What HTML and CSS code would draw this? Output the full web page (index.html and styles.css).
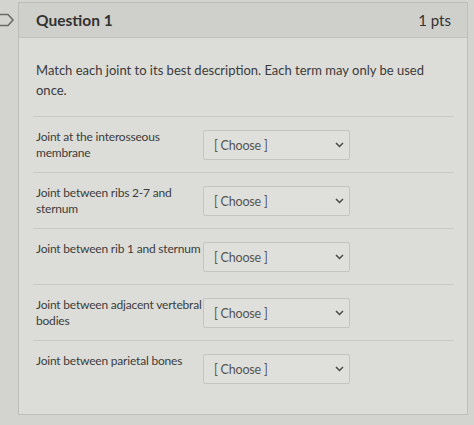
FILE: index.html
```html
<!DOCTYPE html>
<html>
<head>
<meta charset="utf-8">
<link rel="stylesheet" href="styles.css">
</head>
<body>
<div class="page">
  <div class="gutter">
    <svg class="flag" width="16" height="16" viewBox="0 0 16 16"><path d="M-4 2.5 H8 L13 8 L8 13.5 H-4" fill="none" stroke="#6a6a68" stroke-width="1.6" stroke-linejoin="round"/></svg>
  </div>
  <div class="card">
    <div class="header">
      <span class="title">Question 1</span>
      <span class="pts">1 pts</span>
    </div>
    <div class="body">
      <p class="prompt">Match each joint to its best description. Each term may only be used once.</p>
      <div class="rows">
        <div class="row">
          <div class="label">Joint at the interosseous membrane</div>
          <div class="select"><span>[ Choose ]</span><svg class="chev" width="9" height="6" viewBox="0 0 9 6"><path d="M1 1 L4.5 4.5 L8 1" fill="none" stroke="#4a4a4a" stroke-width="1.5"/></svg></div>
        </div>
        <div class="row">
          <div class="label">Joint between ribs 2-7 and sternum</div>
          <div class="select"><span>[ Choose ]</span><svg class="chev" width="9" height="6" viewBox="0 0 9 6"><path d="M1 1 L4.5 4.5 L8 1" fill="none" stroke="#4a4a4a" stroke-width="1.5"/></svg></div>
        </div>
        <div class="row">
          <div class="label">Joint between rib 1 and sternum</div>
          <div class="select"><span>[ Choose ]</span><svg class="chev" width="9" height="6" viewBox="0 0 9 6"><path d="M1 1 L4.5 4.5 L8 1" fill="none" stroke="#4a4a4a" stroke-width="1.5"/></svg></div>
        </div>
        <div class="row">
          <div class="label">Joint between adjacent vertebral bodies</div>
          <div class="select"><span>[ Choose ]</span><svg class="chev" width="9" height="6" viewBox="0 0 9 6"><path d="M1 1 L4.5 4.5 L8 1" fill="none" stroke="#4a4a4a" stroke-width="1.5"/></svg></div>
        </div>
        <div class="row">
          <div class="label">Joint between parietal bones</div>
          <div class="select"><span>[ Choose ]</span><svg class="chev" width="9" height="6" viewBox="0 0 9 6"><path d="M1 1 L4.5 4.5 L8 1" fill="none" stroke="#4a4a4a" stroke-width="1.5"/></svg></div>
        </div>
      </div>
    </div>
  </div>
</div>
</body>
</html>
```
FILE: styles.css
```css
html, body {
  margin: 0;
  padding: 0;
  background: #d3d3cf;
  width: 474px;
  height: 425px;
  overflow: hidden;
  font-family: Lato, "Open Sans", sans-serif;
}
.page {
  display: flex;
  padding-top: 2px;
}
.gutter {
  width: 18px;
  flex: none;
  padding-top: 10px;
}
.flag {
  display: block;
}
.card {
  width: 450px;
  height: 413px;
  box-sizing: border-box;
  border: 1px solid #bdbdb9;
  background: #dcdcd8;
  display: flex;
  flex-direction: column;
}
.header {
  height: 35px;
  box-sizing: border-box;
  background: #cfcfcb;
  border-bottom: 1px solid #c0c0bc;
  display: flex;
  align-items: center;
  justify-content: space-between;
  padding: 0 16px 0 17px;
  color: #2f2f2f;
}
.title {
  font-size: 15.5px;
  font-weight: 700;
  color: #333333;
}
.pts {
  font-size: 15px;
  font-weight: 400;
  color: #333333;
}
.body {
  padding: 22px 13px 0 14px;
}
.prompt {
  margin: 0 0 16px 3px;
  font-size: 13px;
  line-height: 20px;
  color: #3b3b3b;
  width: 392px;
}
.rows {
  display: flex;
  flex-direction: column;
}
.row {
  display: flex;
  align-items: flex-start;
  border-top: 1px solid #c9c9c5;
  padding: 12px 0 11px 0;
}
.label {
  width: 170px;
  min-height: 32px;
  flex: none;
  box-sizing: border-box;
  padding: 0 0 0 3px;
  font-size: 12px;
  letter-spacing: -0.2px;
  line-height: 16px;
  color: #3c3c3c;
}
.select {
  width: 147px;
  height: 30px;
  margin-top: 1px;
  box-sizing: border-box;
  border: 1px solid #c4c4c0;
  border-radius: 2px;
  background: #dfdfdb;
  display: flex;
  align-items: center;
  justify-content: space-between;
  padding: 0 5px 0 10px;
  font-size: 12.5px;
  letter-spacing: -0.2px;
  color: #555553;
}
.chev {
  display: block;
}
```
